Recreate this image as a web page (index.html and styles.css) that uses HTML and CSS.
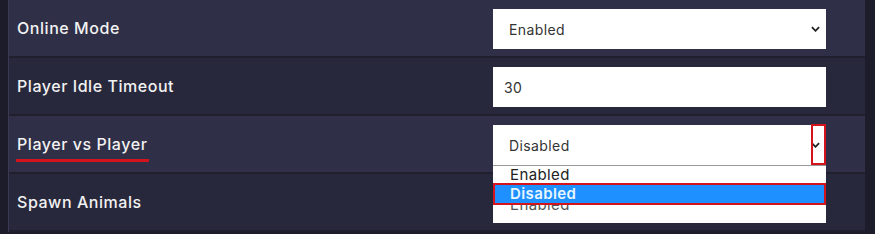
FILE: index.html
```html
<!DOCTYPE html>
<html lang="en">
<head>
    <meta charset="UTF-8">
    <title>Server Settings</title>
    <link rel="stylesheet" href="styles.css">
</head>
<body>
    <div class="settings">
        <!-- online mode -->
        <div class="row light">
            <label class="label">Online Mode</label>
            <div class="field select">
                <span>Enabled</span>
                <svg class="chevron" viewBox="0 0 10 6"><path d="M1 1l4 4 4-4" fill="none" stroke="#222" stroke-width="2"/></svg>
            </div>
        </div>
        <!-- idle timeout -->
        <div class="row dark">
            <label class="label">Player Idle Timeout</label>
            <div class="field input"><span>30</span></div>
        </div>
        <!-- pvp, dropdown open -->
        <div class="row light">
            <label class="label"><span class="marked">Player vs Player</span></label>
            <div class="field select open">
                <span>Disabled</span>
                <svg class="chevron" viewBox="0 0 10 6"><path d="M1 1l4 4 4-4" fill="none" stroke="#222" stroke-width="2"/></svg>
                <div class="arrow-box"></div>
                <ul class="options">
                    <li>Enabled</li>
                    <li class="ghost">Enabled</li>
                    <li class="picked">Disabled</li>
                </ul>
            </div>
        </div>
        <!-- spawn animals -->
        <div class="row dark">
            <label class="label">Spawn Animals</label>
            <div class="field select">
                <span>Enabled</span>
            </div>
        </div>
    </div>
</body>
</html>
```

FILE: styles.css
```css
/* page */
html, body {
    margin: 0;
    padding: 0;
    height: 100%;
    overflow: hidden;
    background-color: #1c1c2a;
    font-family: Inter, "Open Sans", sans-serif;
}

.settings {
    margin: 0 10px 0 8px;
    border-left: 1px solid #3a3a55;
}

/* rows */
.row {
    display: grid;
    grid-template-columns: 1fr 333px;
    align-items: center;
    padding: 9px 39px 7px 8px;
    border-bottom: 2px solid #1f1f2e;
}

.light { background-color: #2f2f47; }
.dark { background-color: #28283c; }

.label {
    color: #f2f2f2;
    font-size: 16px;
    font-weight: 500;
    letter-spacing: 0.55px;
    padding-bottom: 2px;
}

.marked {
    display: inline-block;
    border-bottom: 3px solid #d4141c;
    padding-bottom: 5px;
    margin-bottom: -8px;
    padding-right: 2px;
    margin-left: -1px;
    padding-left: 1px;
}

/* fields */
.field {
    position: relative;
    height: 40px;
    background-color: #fff;
    display: flex;
    align-items: center;
    color: #333;
    font-size: 14px;
    letter-spacing: 0.4px;
}

.select { padding-left: 16px; }
.input { padding-left: 11px; }

.chevron {
    position: absolute;
    right: 6px;
    top: 17px;
    width: 9px;
    height: 6px;
}

.arrow-box {
    position: absolute;
    right: 0;
    top: -1px;
    width: 11px;
    height: 37px;
    border: 2px solid #d4141c;
}

/* open dropdown */
.options {
    position: absolute;
    left: 0;
    right: 0;
    top: 40px;
    height: 57px;
    margin: 0;
    padding: 0;
    list-style: none;
    background-color: #fff;
    border-top: 1px solid #999;
    z-index: 2;
    font-size: 15px;
    color: #222;
    overflow: hidden;
}

.options li {
    height: 18px;
    line-height: 18px;
    padding-left: 17px;
}

.options .ghost {
    position: absolute;
    top: 30px;
    left: 0;
    right: 0;
    color: #555;
}

.options .picked {
    position: absolute;
    top: 17px;
    left: 0;
    right: 0;
    height: 18px;
    line-height: 18px;
    background-color: #1e90ff;
    color: #e8f6ff;
    font-weight: 600;
    border: 2px solid #d4141c;
    padding-left: 15px;
}
```
